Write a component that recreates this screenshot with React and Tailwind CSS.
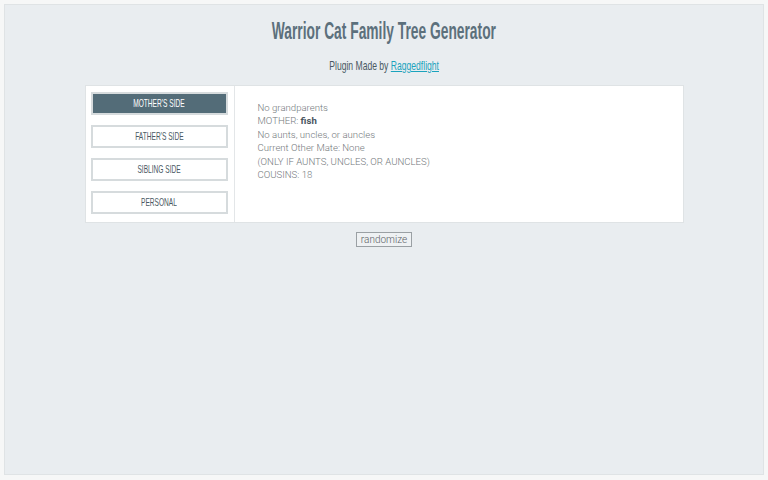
import React, { useState } from "react";

const tabs = ["Mother's Side", "Father's Side", "Sibling Side", "Personal"];

const narrow = "font-['Liberation_Sans',Arial,sans-serif]";

export default function App() {
  const [active, setActive] = useState(0);

  return (
    <div className="h-[480px] w-[768px] bg-[#f6f7f7] p-[4px]">
      <div className="flex h-[471px] flex-col items-center border border-[#dfe3e5] bg-[#e9edf0]">
        <h1 className={`${narrow} mt-[11px] text-[23px] font-bold leading-[30px] text-[#5c707c]`}>
          <span className="inline-block scale-x-[0.6]">Warrior Cat Family Tree Generator</span>
        </h1>
        <p className={`${narrow} mt-[12px] text-[13px] leading-[16px] text-[#4a5963]`}>
          <span className="inline-block scale-x-[0.66]">
            Plugin Made by{" "}
            <a href="#" className="text-[#1ba3bd] underline">
              Raggedflight
            </a>
          </span>
        </p>

        <div className="mt-[11px] flex h-[138px] w-[599px] border border-[#dfe3e5] bg-white">
          <div className="flex w-[149px] flex-col gap-[10px] border-r border-[#e3e6e8] px-[5px] pt-[6px]">
            {tabs.map((tab, i) => (
              <button
                key={tab}
                onClick={() => setActive(i)}
                className={`${narrow} h-[23px] w-[137px] border-2 text-[11px] uppercase ${
                  active === i
                    ? "border-[#d6dbdd] bg-[#536c78] text-white"
                    : "border-[#d6dbdd] bg-white text-[#4a5963]"
                }`}
              >
                <span className="inline-block scale-x-[0.6]">{tab}</span>
              </button>
            ))}
          </div>
          <div className="pl-[23px] pt-[15px] font-['Roboto',sans-serif] text-[9.6px] font-light leading-[13.4px] text-[#74797d]">
            <p>No grandparents</p>
            <p>
              MOTHER: <b className="font-bold text-[#4a5560]">fish</b>
            </p>
            <p>No aunts, uncles, or auncles</p>
            <p>Current Other Mate: None</p>
            <p>(ONLY IF AUNTS, UNCLES, OR AUNCLES)</p>
            <p>COUSINS: 18</p>
          </div>
        </div>

        <button className="mt-[9px] border border-[#9aa0a4] bg-[#eef1f3] px-[4px] font-['Roboto',sans-serif] text-[10px] font-light leading-[13px] text-[#5b6166]">
          randomize
        </button>
      </div>
    </div>
  );
}
